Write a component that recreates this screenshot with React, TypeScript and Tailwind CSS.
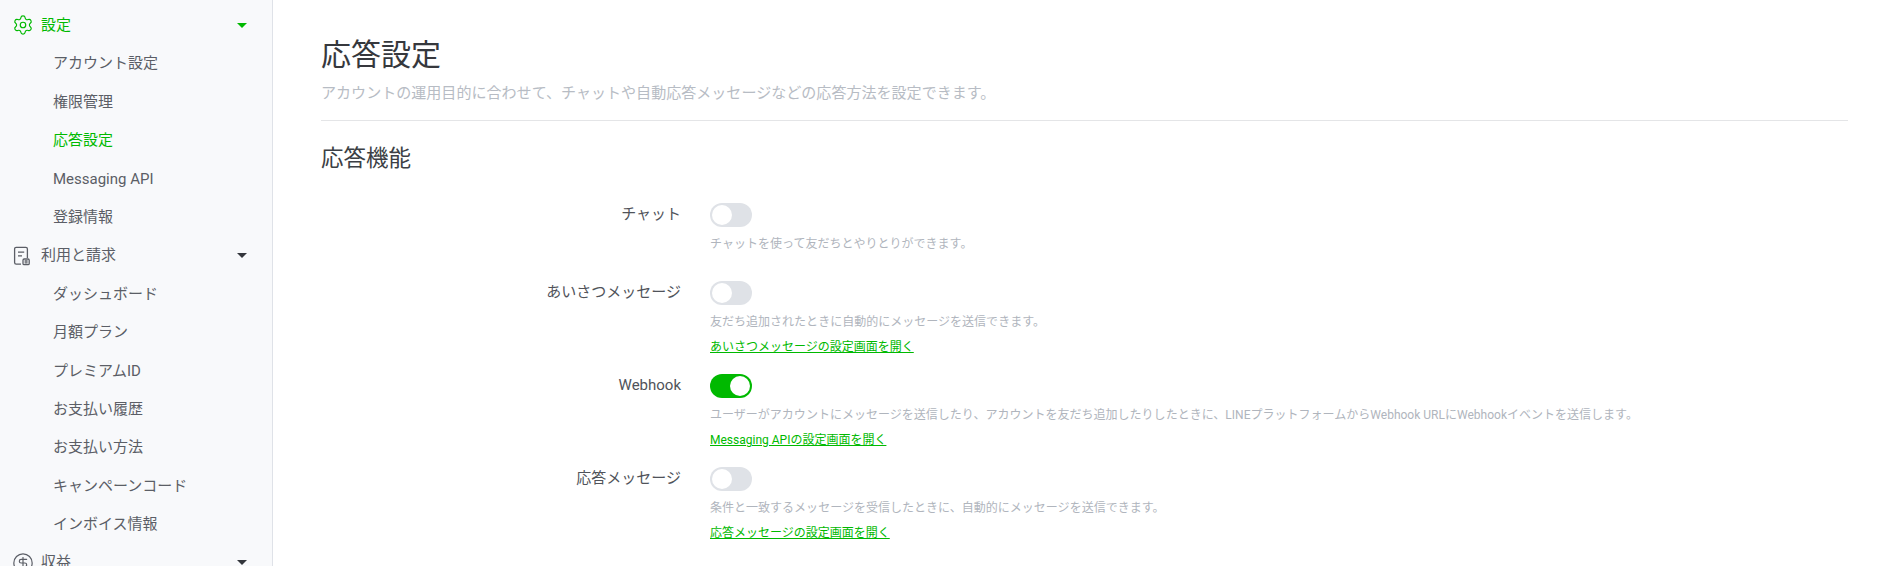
import { Settings, CircleDollarSign } from 'lucide-react';

const font = "font-['Roboto','Noto_Sans_CJK_JP',sans-serif]";

const Caret = ({ active }: { active?: boolean }) => (
  <svg width="10" height="5" viewBox="0 0 10 5" className={active ? 'text-[#00b900]' : 'text-[#33363c]'}>
    <polygon points="0,0 10,0 5,5" fill="currentColor" />
  </svg>
);

const BillIcon = () => (
  <svg width="20" height="20" viewBox="0 0 20 20" fill="none" stroke="currentColor" strokeWidth="1.3">
    <path d="M9 18.2H4.2a1.6 1.6 0 0 1-1.6-1.6V2.9a1.6 1.6 0 0 1 1.6-1.6h9.6a1.6 1.6 0 0 1 1.6 1.6v9.2" />
    <path d="M6 6.2h6.2M6 9.8h4" />
    <rect x="11" y="13" width="6.2" height="5.6" rx="1.2" />
    <path d="M12.6 15h3M12.6 16.8h3" />
  </svg>
);

const menu = [
  {
    title: '設定',
    icon: <Settings size={22} strokeWidth={1.3} />,
    active: true,
    items: ['アカウント設定', '権限管理', '応答設定', 'Messaging API', '登録情報'],
  },
  {
    title: '利用と請求',
    icon: <BillIcon />,
    items: ['ダッシュボード', '月額プラン', 'プレミアムID', 'お支払い履歴', 'お支払い方法', 'キャンペーンコード', 'インボイス情報'],
  },
  {
    title: '収益',
    icon: <CircleDollarSign size={22} strokeWidth={1.3} />,
    items: [],
  },
];

const settings = [
  { label: 'チャット', on: false, help: 'チャットを使って友だちとやりとりができます。' },
  {
    label: 'あいさつメッセージ',
    on: false,
    help: '友だち追加されたときに自動的にメッセージを送信できます。',
    link: 'あいさつメッセージの設定画面を開く',
  },
  {
    label: 'Webhook',
    on: true,
    help: 'ユーザーがアカウントにメッセージを送信したり、アカウントを友だち追加したりしたときに、LINEプラットフォームからWebhook URLにWebhookイベントを送信します。',
    link: 'Messaging APIの設定画面を開く',
  },
  {
    label: '応答メッセージ',
    on: false,
    help: '条件と一致するメッセージを受信したときに、自動的にメッセージを送信できます。',
    link: '応答メッセージの設定画面を開く',
  },
];

const Toggle = ({ on }: { on: boolean }) => (
  <div className={`flex h-6 w-[42px] items-center rounded-full px-0.5 ${on ? 'justify-end bg-[#00b900]' : 'justify-start bg-[#dfe2e7]'}`}>
    <div className="h-5 w-5 rounded-full bg-white" />
  </div>
);

export default function App() {
  return (
    <div className={`flex h-[566px] w-full overflow-hidden bg-white ${font}`}>
      {/* Sidebar */}
      <aside className="h-full w-[273px] shrink-0 overflow-hidden border-r border-[#dfe2e8] bg-[#f8f9fb] pt-1.5 text-[15px] leading-[38.4px] text-[#5b5e66]">
        {menu.map((group) => (
          <div key={group.title}>
            <div className={`flex h-[38.4px] items-center pl-3 pr-[25px] ${group.active ? 'text-[#00b900]' : ''}`}>
              <span className="flex w-[29px] shrink-0 items-center">{group.icon}</span>
              <span className="flex-1">{group.title}</span>
              <Caret active={group.active} />
            </div>
            {group.items.map((name) => (
              <div key={name} className={`h-[38.4px] pl-[53px] ${name === '応答設定' ? 'text-[#00b900]' : ''}`}>
                {name}
              </div>
            ))}
          </div>
        ))}
      </aside>

      {/* Main */}
      <main className="flex-1 pl-[48px] pr-10 pt-[37px]">
        <h1 className="text-[30px] leading-9 text-[#36383d]">応答設定</h1>
        <p className="mt-2.5 text-[15.05px] leading-[20px] text-[#b7bcc4]">
          アカウントの運用目的に合わせて、チャットや自動応答メッセージなどの応答方法を設定できます。
        </p>
        <div className="mt-[17px] border-t border-[#e4e5e7]" />
        <h2 className="mt-[22px] text-[22.5px] leading-[30px] text-[#3c3f45]">応答機能</h2>

        <div className="mt-[30px]">
          {settings.map((row) => (
            <div key={row.label} className={`flex ${row.link ? 'pb-[18px]' : 'pb-7'}`}>
              <div className="mr-[29px] w-[360px] shrink-0 pt-px text-right text-[15px] leading-5 text-[#50535a]">{row.label}</div>
              <div>
                <Toggle on={row.on} />
                <p className="mt-2 text-[12.02px] leading-[18px] text-[#b0b5bd]">{row.help}</p>
                {row.link && (
                  <a className="mt-[7px] block w-fit text-xs leading-[18px] text-[#00b900] underline">{row.link}</a>
                )}
              </div>
            </div>
          ))}
        </div>
      </main>
    </div>
  );
}
